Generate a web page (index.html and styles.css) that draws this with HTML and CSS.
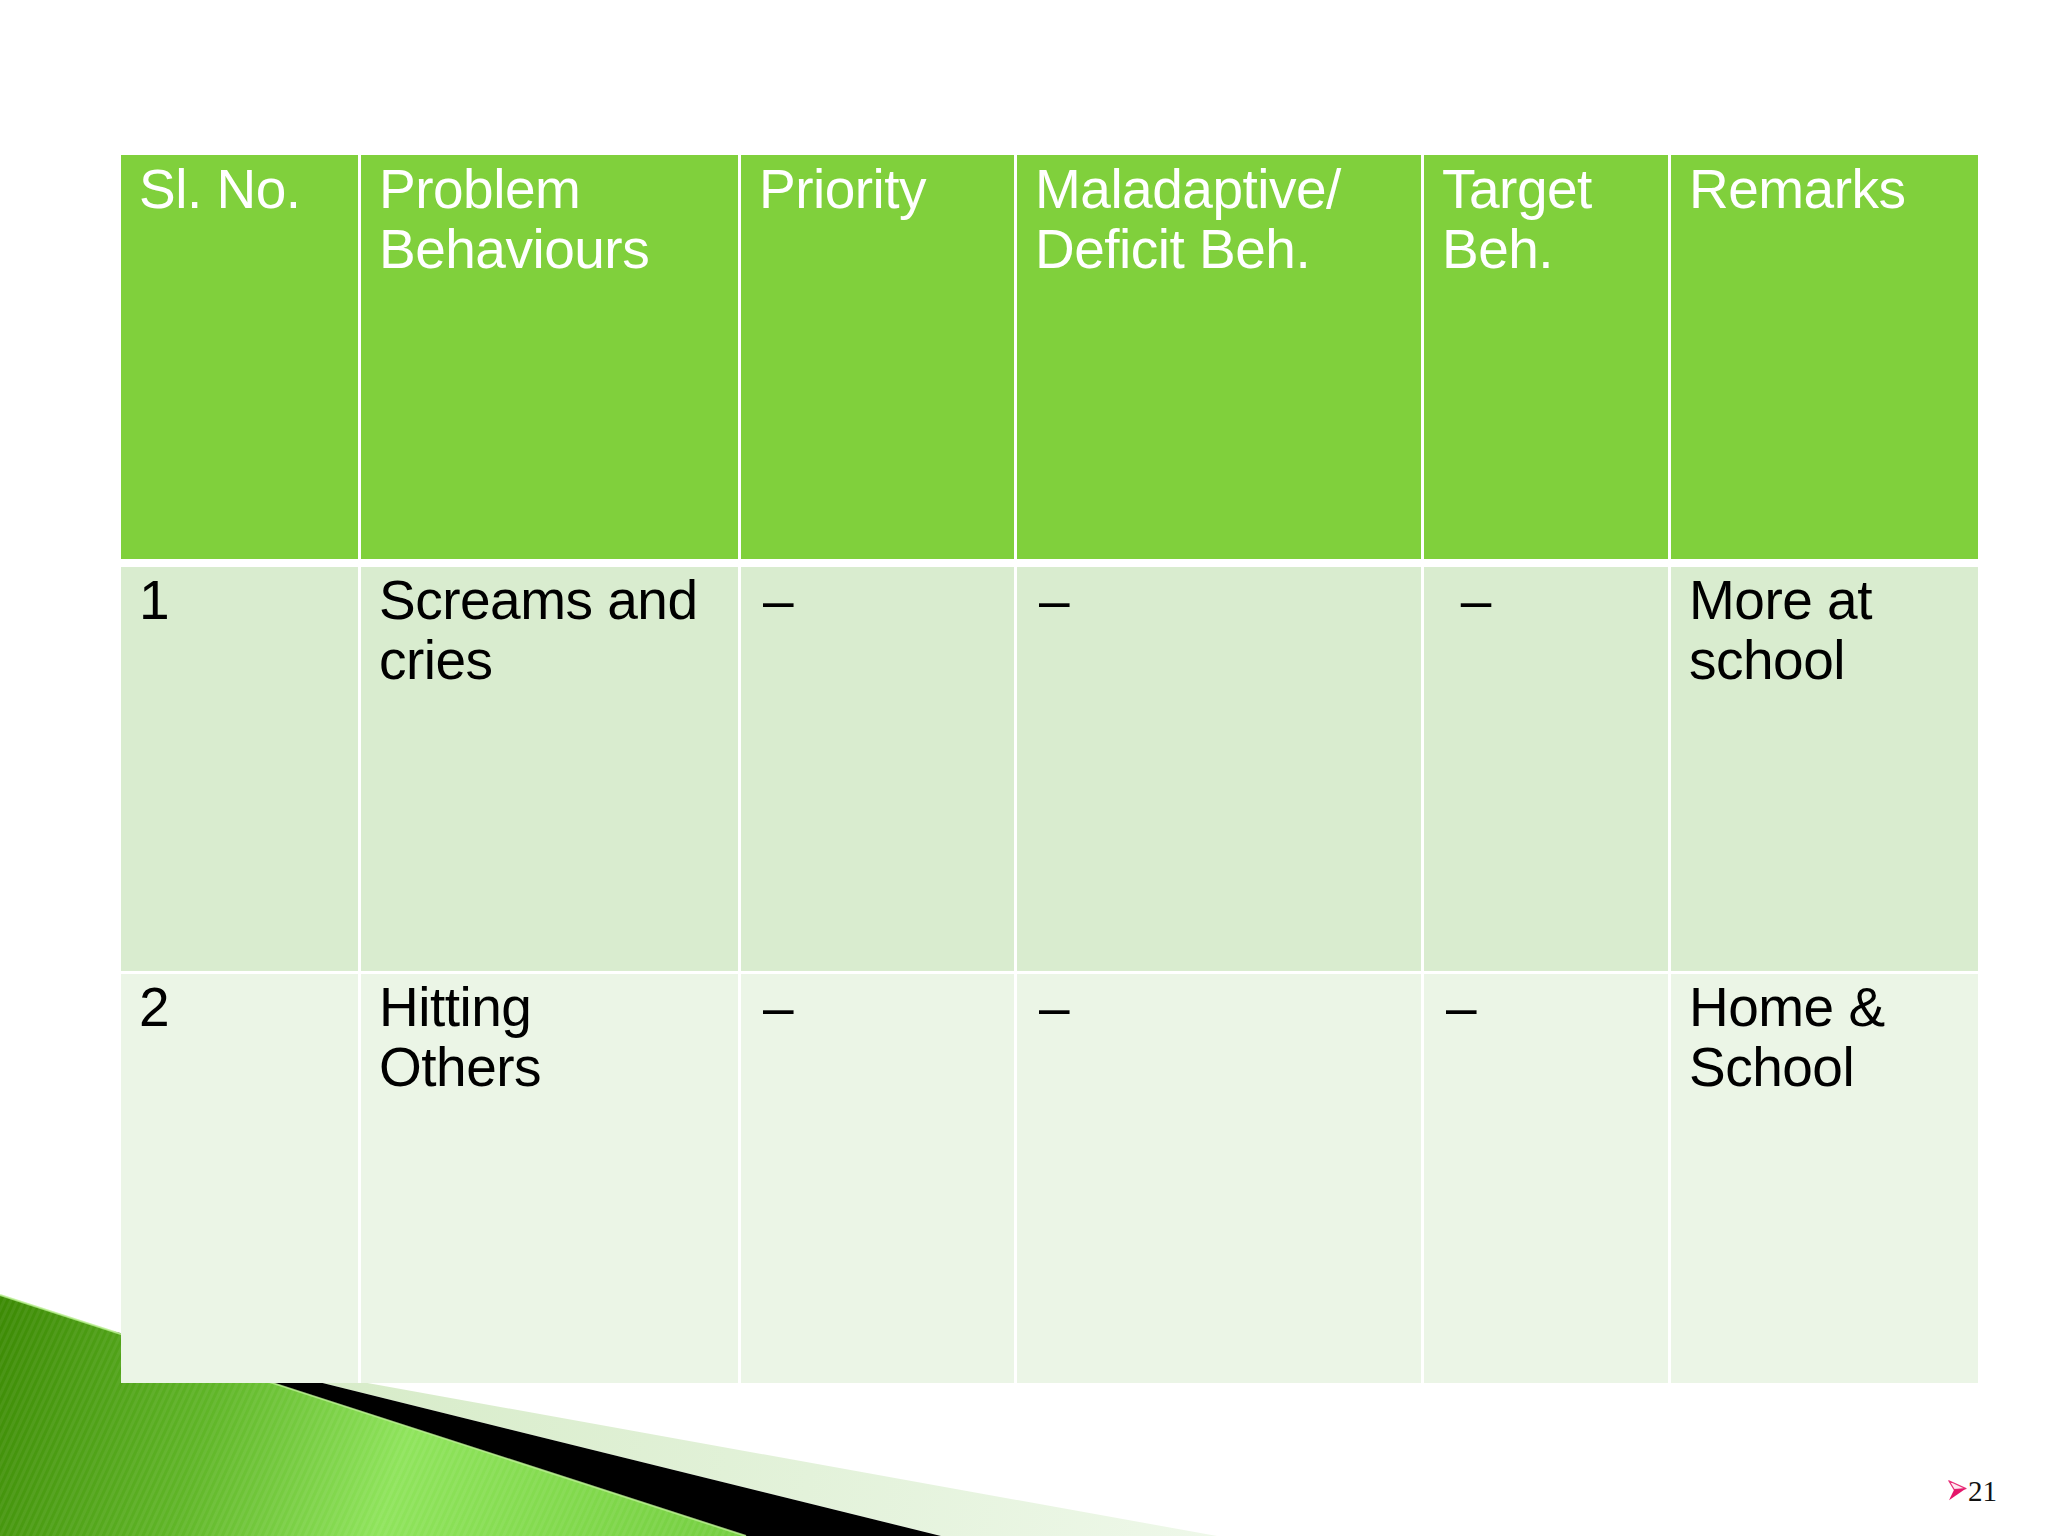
FILE: index.html
```html
<!DOCTYPE html>
<html lang="en">
<head>
<meta charset="utf-8">
<title>Slide 21</title>
<link rel="stylesheet" href="styles.css">
</head>
<body>
<div class="slide">
  <svg class="deco" width="2048" height="1536" viewBox="0 0 2048 1536" aria-hidden="true">
    <defs>
      <linearGradient id="pale" x1="200" y1="1360" x2="1217" y2="1536" gradientUnits="userSpaceOnUse">
        <stop offset="0" stop-color="#d4eac4"/>
        <stop offset="0.6" stop-color="#e3f2da"/>
        <stop offset="1" stop-color="#eef8e9"/>
      </linearGradient>
      <linearGradient id="grn" x1="0" y1="1300" x2="746" y2="1536" gradientUnits="userSpaceOnUse">
        <stop offset="0" stop-color="#3c8a04"/>
        <stop offset="0.3" stop-color="#60b628"/>
        <stop offset="0.55" stop-color="#8fe45c"/>
        <stop offset="0.8" stop-color="#80d84b"/>
        <stop offset="1" stop-color="#74cd40"/>
      </linearGradient>
      <pattern id="stripes" width="6" height="6" patternUnits="userSpaceOnUse" patternTransform="rotate(25)">
        <rect width="3" height="6" fill="#ffffff" opacity="0.06"/>
      </pattern>
    </defs>
    <polygon points="201,1353 1217,1536 941,1536" fill="url(#pale)"/>
    <polygon points="112,1331 941,1536 746,1536" fill="#000"/>
    <polygon points="0,1295 746,1536 0,1536" fill="url(#grn)"/>
    <polygon points="0,1295 746,1536 0,1536" fill="url(#stripes)"/>
    <line x1="0" y1="1295" x2="746" y2="1536" stroke="#b9f08f" stroke-width="2" opacity="0.8"/>
  </svg>

  <div class="table">
    <div class="row head">
      <div class="cell">Sl. No.</div>
      <div class="cell">Problem<br>Behaviours</div>
      <div class="cell">Priority</div>
      <div class="cell">Maladaptive/<br>Deficit Beh.</div>
      <div class="cell">Target<br>Beh.</div>
      <div class="cell">Remarks</div>
    </div>
    <div class="row band1">
      <div class="cell">1</div>
      <div class="cell">Screams and<br>cries</div>
      <div class="cell dash">–</div>
      <div class="cell dash">–</div>
      <div class="cell dash">&nbsp;–</div>
      <div class="cell">More at<br>school</div>
    </div>
    <div class="row band2">
      <div class="cell">2</div>
      <div class="cell">Hitting<br>Others</div>
      <div class="cell dash">–</div>
      <div class="cell dash">–</div>
      <div class="cell dash">–</div>
      <div class="cell">Home &amp;<br>School</div>
    </div>
  </div>

  <div class="pagenum">
    <svg class="bullet" width="19" height="21" viewBox="0 0 19 21" aria-hidden="true">
      <polygon points="0.8,0.8 18,8.6 6.2,9.6" fill="#fde8f0" stroke="#e8327a" stroke-width="1.2" stroke-linejoin="round"/>
      <polygon points="6.2,9.6 18,8.6 1,20.2" fill="#e4166b"/>
    </svg>
    <span class="num">21</span>
  </div>
</div>
</body>
</html>
```

FILE: styles.css
```css
html, body {
  margin: 0;
  padding: 0;
  background: #ffffff;
}

.slide {
  position: relative;
  width: 2048px;
  height: 1536px;
  overflow: hidden;
  background: #ffffff;
  padding: 155px 0 0 121px;
  box-sizing: border-box;
}

.deco {
  position: absolute;
  left: 0;
  top: 0;
  z-index: 0;
}

.table {
  position: relative;
  z-index: 1;
  width: 1857px;
  display: flex;
  flex-direction: column;
  background: #ffffff;
  font-family: "Liberation Sans", Arial, sans-serif;
  font-size: 55px;
  line-height: 60px;
  letter-spacing: -0.5px;
}

.row {
  display: grid;
  grid-template-columns: 237px 377px 273px 404px 244px 307px;
  column-gap: 3px;
}

.cell {
  padding: 4px 0 0 18px;
  white-space: nowrap;
}

.cell.dash {
  padding-left: 22px;
}

.head {
  height: 404px;
  margin-bottom: 8px;
}

.head .cell {
  background: #80d03c;
  color: #ffffff;
}

.band1 {
  height: 404px;
  margin-bottom: 3px;
}

.band1 .cell {
  background: #d9eccf;
  color: #000000;
  padding-top: 3px;
}

.band2 {
  height: 409px;
}

.band2 .cell {
  background: #ebf5e6;
  color: #000000;
  padding-top: 3px;
}

.pagenum {
  position: absolute;
  left: 1948px;
  top: 1477px;
  display: flex;
  align-items: flex-start;
  font-family: "Liberation Serif", "Times New Roman", serif;
  font-size: 29px;
  line-height: 29px;
  color: #111111;
}

.bullet {
  margin-top: 3px;
  margin-right: 1px;
}
```
